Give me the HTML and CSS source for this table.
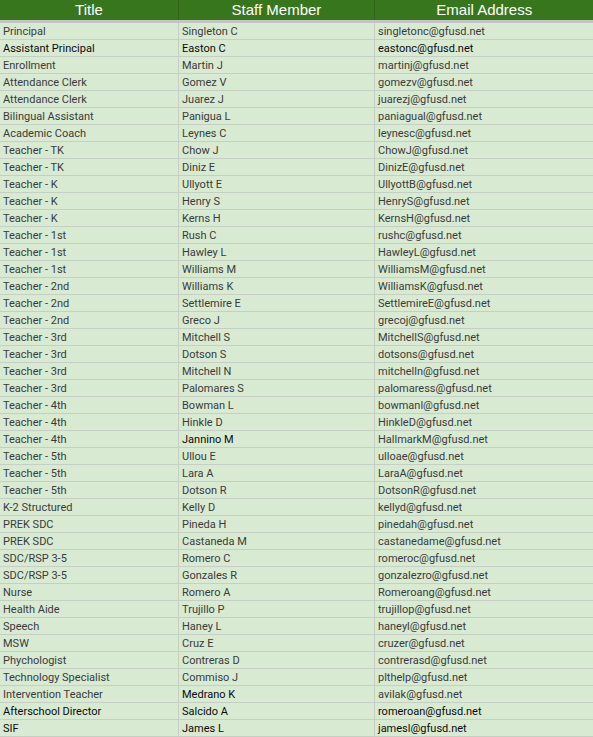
FILE: index.html
```html
<!DOCTYPE html>
<html>
<head>
<meta charset="utf-8">
<link rel="stylesheet" href="styles.css">
</head>
<body>
<table class="staff">
<colgroup><col class="c1"><col class="c2"><col class="c3"></colgroup>
<thead>
<tr><th>Title</th><th>Staff Member</th><th>Email Address</th></tr>
</thead>
<tbody>
<tr><td>Principal</td><td>Singleton C</td><td>singletonc@gfusd.net</td></tr>
<tr class="dk"><td>Assistant Principal</td><td>Easton C</td><td>eastonc@gfusd.net</td></tr>
<tr><td>Enrollment</td><td>Martin J</td><td>martinj@gfusd.net</td></tr>
<tr><td>Attendance Clerk</td><td>Gomez V</td><td>gomezv@gfusd.net</td></tr>
<tr><td>Attendance Clerk</td><td>Juarez J</td><td>juarezj@gfusd.net</td></tr>
<tr><td>Bilingual Assistant</td><td>Panigua L</td><td>paniagual@gfusd.net</td></tr>
<tr><td>Academic Coach</td><td>Leynes C</td><td>leynesc@gfusd.net</td></tr>
<tr><td>Teacher - TK</td><td>Chow J</td><td>ChowJ@gfusd.net</td></tr>
<tr><td>Teacher - TK</td><td>Diniz E</td><td>DinizE@gfusd.net</td></tr>
<tr><td>Teacher - K</td><td>Ullyott E</td><td>UllyottB@gfusd.net</td></tr>
<tr><td>Teacher - K</td><td>Henry S</td><td>HenryS@gfusd.net</td></tr>
<tr><td>Teacher - K</td><td>Kerns H</td><td>KernsH@gfusd.net</td></tr>
<tr><td>Teacher - 1st</td><td>Rush C</td><td>rushc@gfusd.net</td></tr>
<tr><td>Teacher - 1st</td><td>Hawley L</td><td>HawleyL@gfusd.net</td></tr>
<tr><td>Teacher - 1st</td><td>Williams M</td><td>WilliamsM@gfusd.net</td></tr>
<tr><td>Teacher - 2nd</td><td>Williams K</td><td>WilliamsK@gfusd.net</td></tr>
<tr><td>Teacher - 2nd</td><td>Settlemire E</td><td>SettlemireE@gfusd.net</td></tr>
<tr><td>Teacher - 2nd</td><td>Greco J</td><td>grecoj@gfusd.net</td></tr>
<tr><td>Teacher - 3rd</td><td>Mitchell S</td><td>MitchellS@gfusd.net</td></tr>
<tr><td>Teacher - 3rd</td><td>Dotson S</td><td>dotsons@gfusd.net</td></tr>
<tr><td>Teacher - 3rd</td><td>Mitchell N</td><td>mitchelln@gfusd.net</td></tr>
<tr><td>Teacher - 3rd</td><td>Palomares S</td><td>palomaress@gfusd.net</td></tr>
<tr><td>Teacher - 4th</td><td>Bowman L</td><td>bowmanl@gfusd.net</td></tr>
<tr><td>Teacher - 4th</td><td>Hinkle D</td><td>HinkleD@gfusd.net</td></tr>
<tr><td>Teacher - 4th</td><td class="b">Jannino M</td><td>HallmarkM@gfusd.net</td></tr>
<tr><td>Teacher - 5th</td><td>Ullou E</td><td>ulloae@gfusd.net</td></tr>
<tr><td>Teacher - 5th</td><td>Lara A</td><td>LaraA@gfusd.net</td></tr>
<tr><td>Teacher - 5th</td><td>Dotson R</td><td>DotsonR@gfusd.net</td></tr>
<tr><td>K-2 Structured</td><td>Kelly D</td><td>kellyd@gfusd.net</td></tr>
<tr><td>PREK SDC</td><td>Pineda H</td><td>pinedah@gfusd.net</td></tr>
<tr><td>PREK SDC</td><td>Castaneda M</td><td>castanedame@gfusd.net</td></tr>
<tr><td>SDC/RSP 3-5</td><td>Romero C</td><td>romeroc@gfusd.net</td></tr>
<tr><td>SDC/RSP 3-5</td><td>Gonzales R</td><td>gonzalezro@gfusd.net</td></tr>
<tr><td>Nurse</td><td>Romero A</td><td>Romeroang@gfusd.net</td></tr>
<tr><td>Health Aide</td><td>Trujillo P</td><td>trujillop@gfusd.net</td></tr>
<tr><td>Speech</td><td>Haney L</td><td>haneyl@gfusd.net</td></tr>
<tr><td>MSW</td><td>Cruz E</td><td>cruzer@gfusd.net</td></tr>
<tr><td>Phychologist</td><td>Contreras D</td><td>contrerasd@gfusd.net</td></tr>
<tr><td>Technology Specialist</td><td>Commiso J</td><td>plthelp@gfusd.net</td></tr>
<tr><td>Intervention Teacher</td><td class="b">Medrano K</td><td>avilak@gfusd.net</td></tr>
<tr class="dk"><td>Afterschool Director</td><td>Salcido A</td><td>romeroan@gfusd.net</td></tr>
<tr class="dk"><td>SIF</td><td>James L</td><td>jamesl@gfusd.net</td></tr>
</tbody>
</table>
</body>
</html>
```

FILE: styles.css
```css
html, body {
  margin: 0;
  padding: 0;
  background: #d9ead3;
}

.staff {
  border-collapse: collapse;
  table-layout: fixed;
  width: 594px;
  margin-left: -1px;
}

.c1 { width: 179px; }
.c2 { width: 196px; }
.c3 { width: 219px; }

.staff th {
  background: #38761d;
  color: #ffffff;
  font-family: "Liberation Sans", Arial, sans-serif;
  font-weight: normal;
  font-size: 15px;
  height: 20px;
  padding: 0;
  line-height: 20px;
  text-align: center;
  border-left: 1px solid #2f6418;
  border-bottom: 3px solid #c4c4c4;
}

.staff td {
  font-family: Roboto, "Liberation Sans", sans-serif;
  font-size: 11px;
  color: #3a3a3a;
  height: 14px;
  line-height: 14px;
  padding: 2px 0 0 3px;
  border-left: 1px solid #c6cfc3;
  border-bottom: 1px solid #c6cfc3;
  white-space: nowrap;
  overflow: hidden;
}

.staff tr.dk td,
.staff td.b {
  color: #0a0a0a;
}
```
